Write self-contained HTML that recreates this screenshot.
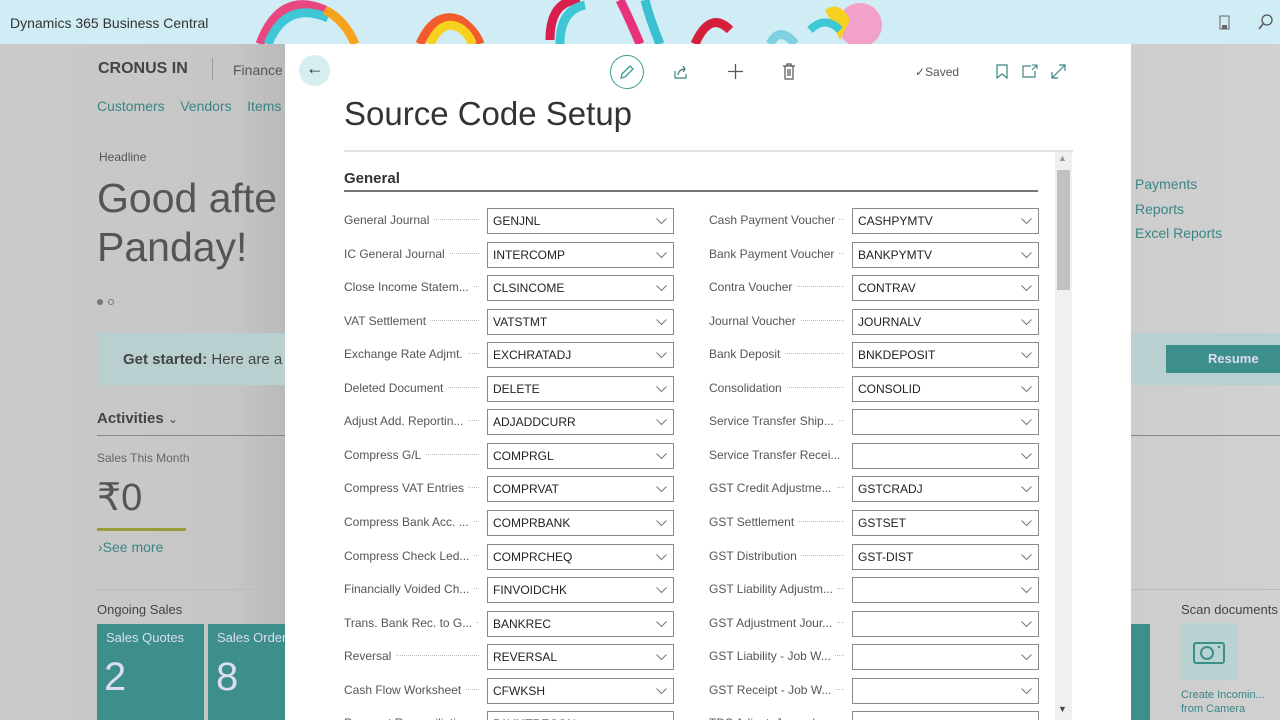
<!DOCTYPE html>
<html style="width:1280px;height:720px;overflow:hidden"><head><meta charset="utf-8"><style>
*{margin:0;padding:0;box-sizing:border-box}
body{width:1280px;height:720px;overflow:hidden;position:relative;font-family:"Liberation Sans","DejaVu Sans",sans-serif;background:#cbcbcb}
.a{position:absolute}
.bg{left:0;top:44px;width:1280px;height:676px;background:linear-gradient(90deg,#cacaca 0%,#c6c6c6 18%,#bababa 22.3%,#cdcdcd 88.4%,#d1d1d1 100%)}
.hdr{left:0;top:0;width:1280px;height:44px;background:#d0ecf5}
.t{white-space:nowrap}
.dlg{left:285px;top:44px;width:846px;height:676px;background:#fff}
.lbl{font-size:12px;color:#555;white-space:nowrap}
.inp{width:187px;height:26px;border:1px solid #8a8a8a;background:#fff;font-size:12px;color:#222;padding:5px 0 0 5px}
.inp svg{position:absolute;right:6px;top:9px}
#clip{position:absolute;left:0;top:0;width:1280px;height:720px;overflow:hidden}
</style></head><body>
<div class="a bg"></div>
<div class="a hdr"></div>
<svg class="a" style="left:250px;top:0" width="680" height="44" viewBox="0 0 680 44">
<g fill="none" stroke-width="9">
<path d="M10 44 Q30 -10 75 10" stroke="#e9477f"/><path d="M18 44 Q36 0 78 18" stroke="#3fc7d6"/>
<path d="M75 10 Q95 20 105 44" stroke="#f7a21d"/>
<path d="M170 44 Q185 10 210 20 Q225 30 230 44" stroke="#f25b2a"/><path d="M180 44 Q192 18 210 28 Q220 35 222 44" stroke="#f6d21f"/>
<path d="M300 40 Q300 0 330 0" stroke="#d81f4e"/><path d="M310 44 Q310 10 335 5" stroke="#3fc7d6"/>
<path d="M370 0 Q380 20 390 44" stroke="#e8337c"/><path d="M395 0 Q400 20 410 44" stroke="#3ac0d0"/>
<path d="M445 44 Q460 10 480 30" stroke="#d61d3a"/><path d="M520 44 Q530 25 545 44" stroke="#7fd0e0"/>
</g>
<circle cx="610" cy="25" r="22" fill="#f2a2c8"/><path d="M575 10 Q590 0 600 20 L590 40 Z" fill="#f6d21f"/><path d="M560 30 Q575 15 590 30" stroke="#3fc7d6" stroke-width="8" fill="none"/>
</svg>
<div class="a t" style="left:10px;top:15px;font-size:14px;color:#333">Dynamics 365 Business Central</div>
<svg class="a" style="left:1218px;top:15px" width="14" height="16"><rect x="2" y="1" width="9" height="13" fill="none" stroke="#666"/><rect x="4" y="10" width="5" height="4" fill="#666"/></svg>
<svg class="a" style="left:1258px;top:14px" width="16" height="16"><circle cx="9" cy="6" r="5" fill="none" stroke="#555" stroke-width="1.3"/><path d="M5 10 L1 15" stroke="#555" stroke-width="1.5"/></svg>

<div class="a t" style="left:98px;top:60px;font-size:16px;color:#444;font-weight:bold">CRONUS IN</div>
<div class="a" style="left:212px;top:58px;width:1px;height:22px;background:#999"></div>
<div class="a t" style="left:233px;top:62px;font-size:14px;color:#555">Finance</div>
<div class="a t" style="left:97px;top:98px;font-size:14px;color:#3a8584">Customers&nbsp;&nbsp;&nbsp;&nbsp;Vendors&nbsp;&nbsp;&nbsp;&nbsp;Items</div>
<div class="a t" style="left:99px;top:150px;font-size:12px;color:#555">Headline</div>
<div class="a t" style="left:97px;top:174px;font-size:41px;color:#555;line-height:49px">Good afte<br>Panday!</div>
<div class="a" style="left:97px;top:299px;width:6px;height:6px;border-radius:3px;background:#777"></div>
<div class="a" style="left:108px;top:299px;width:6px;height:6px;border-radius:3px;border:1px solid #777"></div>
<div class="a" style="left:97px;top:333px;width:188px;height:52px;background:#b9cfd0"></div>
<div class="a t" style="left:123px;top:351px;font-size:15px;color:#444"><b>Get started:</b> Here are a</div>
<div class="a t" style="left:97px;top:410px;font-size:15px;color:#444;font-weight:bold">Activities <span style="font-weight:normal;font-size:12px">&#8964;</span></div>
<div class="a" style="left:97px;top:435px;width:188px;height:1px;background:#888"></div>
<div class="a t" style="left:97px;top:451px;font-size:12px;color:#666">Sales This Month</div>
<div class="a t" style="left:97px;top:475px;font-size:38px;color:#555">₹0</div>
<div class="a" style="left:97px;top:528px;width:89px;height:3px;background:#9a9c3c"></div>
<div class="a t" style="left:98px;top:539px;font-size:14px;color:#3a8584">›See more</div>
<div class="a" style="left:97px;top:589px;width:188px;height:1px;background:#bbb"></div>
<div class="a t" style="left:97px;top:602px;font-size:13px;color:#444">Ongoing Sales</div>
<div class="a" style="left:97px;top:624px;width:107px;height:96px;background:#3d8f8c"></div>
<div class="a" style="left:208px;top:624px;width:77px;height:96px;background:#3d8f8c"></div>
<div class="a t" style="left:106px;top:630px;font-size:13px;color:#dde">Sales Quotes</div>
<div class="a t" style="left:217px;top:630px;font-size:13px;color:#dde">Sales Orders</div>
<div class="a t" style="left:104px;top:655px;font-size:40px;color:#dde">2</div>
<div class="a t" style="left:216px;top:655px;font-size:40px;color:#dde">8</div>
<div class="a t" style="left:1135px;top:172px;font-size:14px;color:#3a8584;line-height:24.5px">Payments<br>Reports<br>Excel Reports</div>
<div class="a" style="left:1131px;top:333px;width:149px;height:52px;background:#b9cfd0"></div>
<div class="a" style="left:1166px;top:345px;width:114px;height:28px;background:#3d8f8c;color:#dde;font-size:13px;font-weight:bold;padding:6px 0 0 42px">Resume</div>
<div class="a" style="left:1131px;top:435px;width:149px;height:1px;background:#888"></div>
<div class="a" style="left:1131px;top:589px;width:149px;height:1px;background:#bbb"></div>
<div class="a" style="left:1131px;top:624px;width:19px;height:96px;background:#3d8f8c"></div>
<div class="a t" style="left:1181px;top:602px;font-size:13px;color:#444">Scan documents</div>
<div class="a" style="left:1181px;top:623px;width:57px;height:57px;background:#b9d3d2"></div>
<svg class="a" style="left:1193px;top:641px" width="32" height="24"><rect x="1" y="2" width="30" height="20" rx="2" fill="none" stroke="#3d8f8c" stroke-width="2"/><circle cx="14" cy="12" r="6" fill="none" stroke="#3d8f8c" stroke-width="2"/><circle cx="26" cy="6" r="1.3" fill="#3d8f8c"/></svg>
<div class="a t" style="left:1181px;top:688px;font-size:11px;color:#3a8584;line-height:14px">Create Incomin...<br>from Camera</div>

<div class="a dlg"></div>
<div class="a" style="left:299px;top:55px;width:31px;height:31px;border-radius:50%;background:#d6eef0"></div>
<div class="a t" style="left:306px;top:58px;font-size:18px;color:#333">←</div>
<div class="a" style="left:610px;top:55px;width:34px;height:34px;border-radius:50%;border:1.5px solid #3a9a94"></div>
<svg class="a" style="left:619px;top:64px" width="16" height="16"><path d="M2 14 L3 10 L11 2 L14 5 L6 13 Z" fill="none" stroke="#3a9a94" stroke-width="1.3"/></svg>
<svg class="a" style="left:673px;top:64px" width="16" height="16"><path d="M2 7 V14 H13 V10" fill="none" stroke="#3a8584" stroke-width="1.2"/><path d="M5 11 Q6 5 12 5 L10 2 M12 5 L10 8" fill="none" stroke="#3a8584" stroke-width="1.2"/></svg>
<svg class="a" style="left:727px;top:63px" width="17" height="17"><path d="M8.5 1 V16 M1 8.5 H16" stroke="#555" stroke-width="1.3"/></svg>
<svg class="a" style="left:782px;top:63px" width="14" height="17"><path d="M1 3 H13 M5 3 V1 H9 V3 M3 3 V16 H11 V3 M6 6 V13 M8 6 V13" fill="none" stroke="#555" stroke-width="1.2"/></svg>
<div class="a t" style="left:915px;top:65px;font-size:12px;color:#555">✓Saved</div>
<svg class="a" style="left:996px;top:64px" width="12" height="15"><path d="M1 1 H11 V14 L6 10 L1 14 Z" fill="none" stroke="#3a8584" stroke-width="1.2"/></svg>
<svg class="a" style="left:1022px;top:64px" width="16" height="14"><path d="M9 2 H1 V13 H13 V7" fill="none" stroke="#3a8584" stroke-width="1.2"/><path d="M10 1 H15 V5 M15 1 L10 6" fill="none" stroke="#3a8584" stroke-width="1.1"/></svg>
<svg class="a" style="left:1051px;top:64px" width="15" height="15"><path d="M1 14 L14 1 M8 1 H14 V7 M1 8 V14 H7" fill="none" stroke="#3a8584" stroke-width="1.2"/></svg>
<div class="a t" style="left:344px;top:95px;font-size:33px;color:#333">Source Code Setup</div>
<div class="a" style="left:344px;top:150px;width:729px;height:2px;background:#e3e3e3"></div>
<div class="a" style="left:1055px;top:152px;width:17px;height:568px;background:#f0f0f0"></div>
<div class="a" style="left:1057px;top:170px;width:13px;height:120px;background:#c1c1c1"></div>
<div class="a t" style="left:1058px;top:153px;font-size:9px;color:#999">▲</div>
<div class="a t" style="left:1058px;top:704px;font-size:9px;color:#444">▼</div>
<div class="a t" style="left:344px;top:170px;font-size:15px;color:#333;font-weight:bold">General</div>
<div class="a" style="left:344px;top:190px;width:694px;height:1.5px;background:#777"></div>
<div id="clip"></div>
<script>
var L=[["General Journal","GENJNL"],["IC General Journal","INTERCOMP"],["Close Income Statem...","CLSINCOME"],["VAT Settlement","VATSTMT"],["Exchange Rate Adjmt.","EXCHRATADJ"],["Deleted Document","DELETE"],["Adjust Add. Reportin...","ADJADDCURR"],["Compress G/L","COMPRGL"],["Compress VAT Entries","COMPRVAT"],["Compress Bank Acc. ...","COMPRBANK"],["Compress Check Led...","COMPRCHEQ"],["Financially Voided Ch...","FINVOIDCHK"],["Trans. Bank Rec. to G...","BANKREC"],["Reversal","REVERSAL"],["Cash Flow Worksheet","CFWKSH"],["Payment Reconciliati...","PAYMTRECON"]];
var R=[["Cash Payment Voucher","CASHPYMTV"],["Bank Payment Voucher","BANKPYMTV"],["Contra Voucher","CONTRAV"],["Journal Voucher","JOURNALV"],["Bank Deposit","BNKDEPOSIT"],["Consolidation","CONSOLID"],["Service Transfer Ship...",""],["Service Transfer Recei...",""],["GST Credit Adjustme...","GSTCRADJ"],["GST Settlement","GSTSET"],["GST Distribution","GST-DIST"],["GST Liability Adjustm...",""],["GST Adjustment Jour...",""],["GST Liability - Job W...",""],["GST Receipt - Job W...",""],["TDS Adjust. Journal",""]];
var h="",chev='<svg width="11" height="7"><path d="M0.5 0.5 L5.5 5.5 L10.5 0.5" fill="none" stroke="#777" stroke-width="1"/></svg>';
function dots(x,y,w){return '<div class="a" style="left:'+x+'px;top:'+(y+7)+'px;width:'+w+'px;border-top:1.5px dotted #bbb"></div>';}
for(var i=0;i<16;i++){var y=Math.round(208+i*33.55);
[[L[i],344,487],[R[i],709,852]].forEach(function(c){
h+=dots(c[1],y+4,c[2]-c[1]-8);
h+='<div class="a lbl" style="left:'+c[1]+'px;top:'+(y+5)+'px;background:#fff;padding-right:4px">'+c[0][0]+'</div>';
h+='<div class="a inp" style="left:'+c[2]+'px;top:'+y+'px">'+c[0][1]+chev+'</div>';});}
document.getElementById("clip").innerHTML=h;
</script>
</body></html>
